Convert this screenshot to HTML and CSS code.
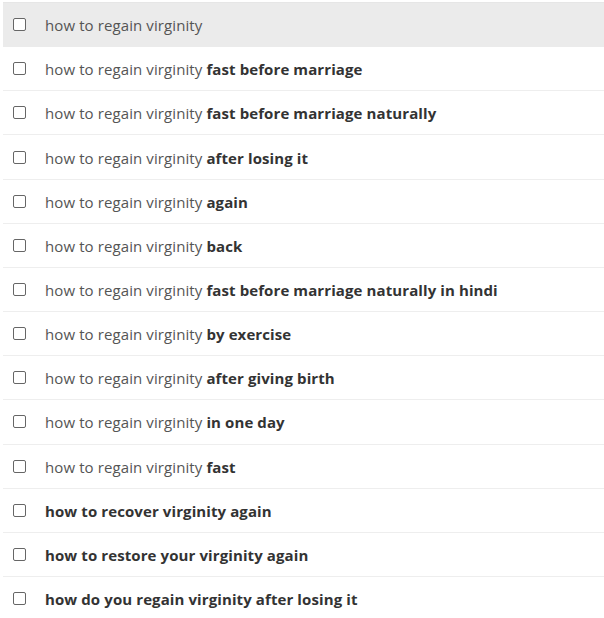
FILE: index.html
```html
<!DOCTYPE html>
<html lang="en">
<head>
    <meta charset="UTF-8">
    <title>Keyword suggestions</title>
    <link rel="stylesheet" href="styles.css">
</head>
<body>
    <ul class="suggest-list">
        <li class="suggest-item active"><span class="check"></span><span class="kw">how to regain virginity</span></li>
        <li class="suggest-item"><span class="check"></span><span class="kw">how to regain virginity <b>fast before marriage</b></span></li>
        <li class="suggest-item"><span class="check"></span><span class="kw">how to regain virginity <b>fast before marriage naturally</b></span></li>
        <li class="suggest-item"><span class="check"></span><span class="kw">how to regain virginity <b>after losing it</b></span></li>
        <li class="suggest-item"><span class="check"></span><span class="kw">how to regain virginity <b>again</b></span></li>
        <li class="suggest-item"><span class="check"></span><span class="kw">how to regain virginity <b>back</b></span></li>
        <li class="suggest-item"><span class="check"></span><span class="kw">how to regain virginity <b>fast before marriage naturally in hindi</b></span></li>
        <li class="suggest-item"><span class="check"></span><span class="kw">how to regain virginity <b>by exercise</b></span></li>
        <li class="suggest-item"><span class="check"></span><span class="kw">how to regain virginity <b>after giving birth</b></span></li>
        <li class="suggest-item"><span class="check"></span><span class="kw">how to regain virginity <b>in one day</b></span></li>
        <li class="suggest-item"><span class="check"></span><span class="kw">how to regain virginity <b>fast</b></span></li>
        <li class="suggest-item"><span class="check"></span><span class="kw"><b>how to recover virginity again</b></span></li>
        <li class="suggest-item"><span class="check"></span><span class="kw"><b>how to restore your virginity again</b></span></li>
        <li class="suggest-item"><span class="check"></span><span class="kw"><b>how do you regain virginity after losing it</b></span></li>
    </ul>
</body>
</html>
```

FILE: styles.css
```css
body {
    margin: 0;
    padding: 2px 0 0 3px;
    background-color: #fff;
    font-family: "Open Sans", Arial, sans-serif;
    font-size: 15px;
    letter-spacing: 0.1px;
    color: #555;
}

.suggest-list {
    list-style: none;
    margin: 0;
    padding: 0;
    border-top: 1px solid #e6e6e6;
}

.suggest-item {
    display: flex;
    align-items: center;
    height: 44.17px;
    box-sizing: border-box;
    border-bottom: 1px solid #eee;
}

.suggest-item.active {
    background-color: #ebebeb;
    border-bottom-color: #ebebeb;
}

.check {
    width: 13px;
    height: 13px;
    box-sizing: border-box;
    border: 1px solid #666;
    border-radius: 2px;
    background-color: #fff;
    margin: 0 19px 0 10px;
    flex-shrink: 0;
}

.kw {
    padding-top: 1px;
}

.kw b {
    font-weight: 700;
    color: #333;
}
```
